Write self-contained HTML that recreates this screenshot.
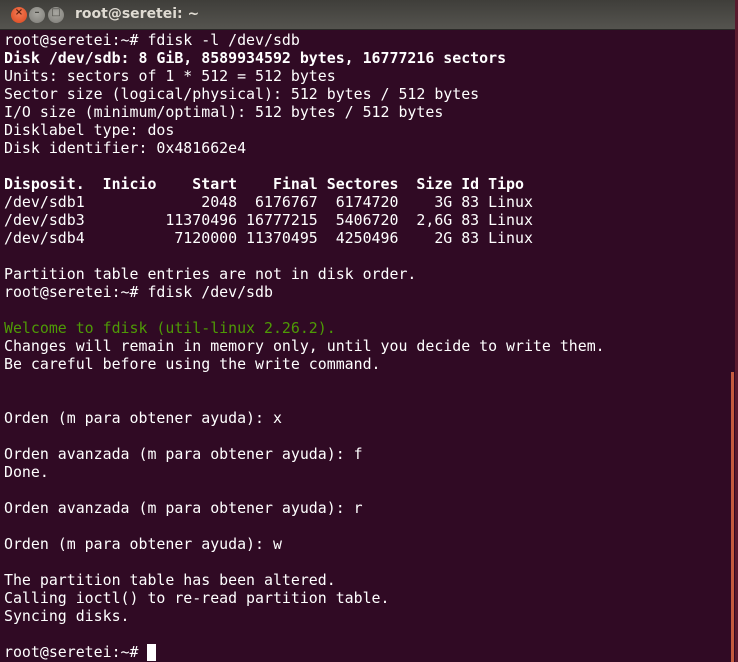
<!DOCTYPE html>
<html><head><meta charset="utf-8"><style>
html,body{margin:0;padding:0;width:738px;height:662px;overflow:hidden;background:#300a24;}
.tb{position:absolute;left:0;top:0;width:738px;height:29px;background:linear-gradient(#3f3e3a,#55544f);border-bottom:1px solid #2a2a27;}
.c{position:absolute;top:7px;width:16px;height:16px;border-radius:50%;}
.c1{left:11px;background:radial-gradient(circle at 50% 40%,#f47b55,#d9461d);}
.c2{left:29px;background:radial-gradient(circle at 50% 40%,#a8a7a1,#7c7b76);}
.c3{left:48px;background:radial-gradient(circle at 50% 40%,#a8a7a1,#7c7b76);}
.c span{position:absolute;left:0;top:0;width:16px;height:16px;line-height:16px;text-align:center;font:bold 10px "DejaVu Sans",sans-serif;color:#4a4944;}
.c1 span{color:#5a2010;}
.title{position:absolute;left:75px;top:6px;font:bold 14px "DejaVu Sans","Liberation Sans",sans-serif;color:#dfdbd2;}
pre{position:absolute;left:4px;top:31px;margin:0;font-family:"DejaVu Sans Mono","Liberation Mono",monospace;font-size:14.9px;line-height:18px;color:#ffffff;}
b{font-weight:bold;}
.g{color:#4e9a06;}
.cur{display:inline-block;width:9px;height:17px;background:#fff;vertical-align:-4px;}
.sb{position:absolute;left:731px;top:372px;width:3px;height:290px;background:#c55b3f;}
.rb{position:absolute;left:735px;top:0;width:3px;height:662px;background:#5a1a2e;}
</style></head><body>
<div class="tb">
<div class="c c1"><span>×</span></div>
<div class="c c2"><span>–</span></div>
<div class="c c3"><span>□</span></div>
<div class="title">root@seretei: ~</div>
</div>
<pre>root@seretei:~# fdisk -l /dev/sdb
<b>Disk /dev/sdb: 8 GiB, 8589934592 bytes, 16777216 sectors</b>
Units: sectors of 1 * 512 = 512 bytes
Sector size (logical/physical): 512 bytes / 512 bytes
I/O size (minimum/optimal): 512 bytes / 512 bytes
Disklabel type: dos
Disk identifier: 0x481662e4

<b>Disposit.  Inicio    Start    Final Sectores  Size Id Tipo</b>
/dev/sdb1             2048  6176767  6174720    3G 83 Linux
/dev/sdb3         11370496 16777215  5406720  2,6G 83 Linux
/dev/sdb4          7120000 11370495  4250496    2G 83 Linux

Partition table entries are not in disk order.
root@seretei:~# fdisk /dev/sdb

<span class="g">Welcome to fdisk (util-linux 2.26.2).</span>
Changes will remain in memory only, until you decide to write them.
Be careful before using the write command.


Orden (m para obtener ayuda): x

Orden avanzada (m para obtener ayuda): f
Done.

Orden avanzada (m para obtener ayuda): r

Orden (m para obtener ayuda): w

The partition table has been altered.
Calling ioctl() to re-read partition table.
Syncing disks.

root@seretei:~# <span class="cur"></span></pre>
<div class="sb"></div>
<div class="rb"></div>
</body></html>
